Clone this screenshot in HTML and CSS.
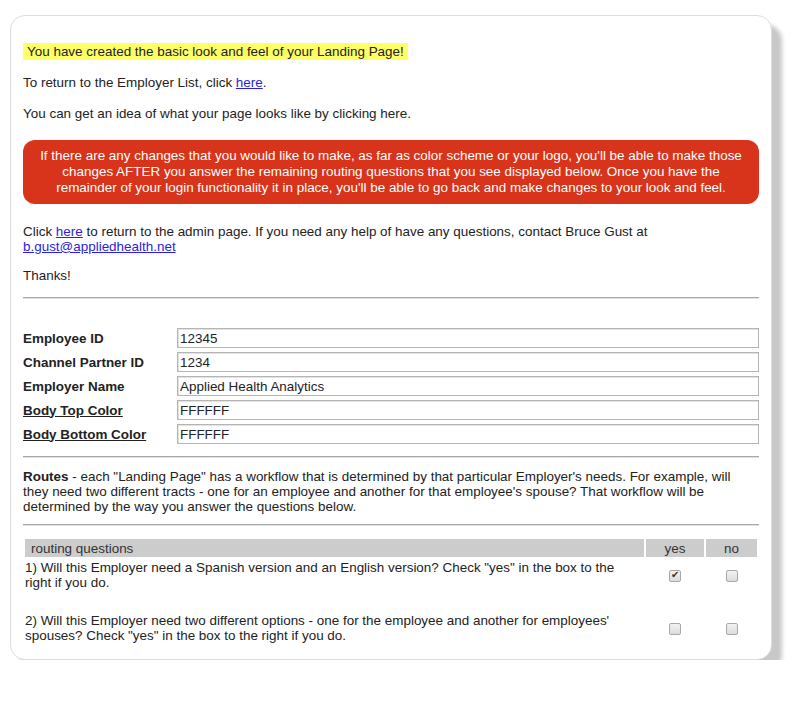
FILE: index.html
```html
<!DOCTYPE html>
<html lang="en">
<head>
    <meta charset="UTF-8">
    <meta name="viewport" content="width=device-width, initial-scale=1.0">
    <title> Landing Page Setup </title>
    <link rel="stylesheet" href="styles.css">
</head>

<body>
    <div class="container">
        <p><span class="highlight">You have created the basic look and feel of your Landing Page!</span></p>
        <p>To return to the Employer List, click <a href="#">here</a>.</p>
        <p>You can get an idea of what your page looks like by clicking here.</p>

        <div class="notice">
            If there are any changes that you would like to make, as far as color scheme or your logo, you'll be able to make those
            changes AFTER you answer the remaining routing questions that you see displayed below. Once you have the
            remainder of your login functionality it in place, you'll be able to go back and make changes to your look and feel.
        </div>

        <p class="contact">Click <a href="#">here</a> to return to the admin page. If you need any help of have any questions, contact Bruce Gust at<br>
            <a href="#">b.gust@appliedhealth.net</a></p>
        <p class="thanks">Thanks!</p>

        <hr>

        <!-- datos del empleador -->
        <div class="employer-form">
            <label>Employee ID</label>
            <input type="text" value="12345">
            <label>Channel Partner ID</label>
            <input type="text" value="1234">
            <label>Employer Name</label>
            <input type="text" value="Applied Health Analytics">
            <label class="underline">Body Top Color</label>
            <input type="text" value="FFFFFF">
            <label class="underline">Body Bottom Color</label>
            <input type="text" value="FFFFFF">
        </div>

        <hr class="before-routes">

        <p class="routes"><b>Routes</b> - each "Landing Page" has a workflow that is determined by that particular Employer's needs. For example, will
            they need two different tracts - one for an employee and another for that employee's spouse? That workflow will be
            determined by the way you answer the questions below.</p>

        <hr class="before-table">

        <table class="routing">
            <tr>
                <th class="question-head">routing questions</th>
                <th class="yes-col">yes</th>
                <th class="no-col">no</th>
            </tr>
            <tr>
                <td>1) Will this Employer need a Spanish version and an English version? Check "yes" in the box to the right if you do.</td>
                <td class="check"><input type="checkbox" name="spanish-yes" checked></td>
                <td class="check"><input type="checkbox" name="spanish-no"></td>
            </tr>
            <tr class="spacer"><td colspan="3"></td></tr>
            <tr>
                <td>2) Will this Employer need two different options - one for the employee and another for employees' spouses? Check "yes" in the box to the right if you do.</td>
                <td class="check"><input type="checkbox" name="spouse-yes"></td>
                <td class="check"><input type="checkbox" name="spouse-no"></td>
            </tr>
        </table>
    </div>
</body>
</html>
```

FILE: styles.css
```css
body
{
    margin: 0;
    font-family: "Liberation Sans", Arial, sans-serif;
    font-size: 13.45px;
    line-height: 15px;
    color: #222;
    background-color: #fff;
}

.container
{
    width: 736px;
    margin: 15px 0 0 10px;
    padding: 12px 12px 13px 12px;
    border: 1px solid #ddd;
    border-radius: 15px;
    box-shadow: 10px 10px 4px #c8c8c8;
    background-color: #fff;
}

p
{
    margin: 16px 0;
}

a
{
    color: #2a1ee0;
}

.highlight
{
    background-color: #ffff66;
    padding: 1px 4px;
}

.notice
{
    margin: 19px 0 20px 0;
    padding: 8px 12px 8px 12px;
    background-color: #d8341b;
    color: #fff;
    border-radius: 12px;
    text-align: center;
    line-height: 16px;
}

.contact
{
    margin: 0 0 14px 0;
}

.thanks
{
    margin: 14px 0;
}

hr
{
    border: none;
    border-top: 1px solid #a8a8a8;
    border-bottom: 1px solid #e2e2e2;
    margin: 12px 0;
}

hr.before-routes
{
    margin: 12px 0 11px 0;
}

hr.before-table
{
    margin: 10px 0 0 0;
}

.employer-form
{
    display: grid;
    grid-template-columns: 154px 1fr;
    row-gap: 4px;
    align-items: center;
    margin: 29px 0 11px 0;
}

.employer-form label
{
    font-weight: bold;
}

.employer-form .underline
{
    text-decoration: underline;
}

.employer-form input
{
    height: 20px;
    box-sizing: border-box;
    padding: 0 2px;
    border: 1px solid #b5b5b5;
    box-shadow: inset 1px 1px 0 #e2e2e2;
    font-family: "Liberation Sans", Arial, sans-serif;
    font-size: 13.45px;
    color: #222;
}

.routes
{
    margin: 11px 0 10px 0;
}

.routing
{
    width: 100%;
    border-spacing: 2px;
    margin-top: 11px;
}

.routing th
{
    background-color: #ccc;
    color: #333;
    font-weight: normal;
    height: 18px;
    padding: 0;
}

.routing .question-head
{
    text-align: left;
    padding-left: 6px;
}

.routing .yes-col
{
    width: 58px;
}

.routing .no-col
{
    width: 51px;
}

.routing td
{
    padding: 1px 28px 1px 0;
    vertical-align: middle;
}

.routing td.check
{
    padding: 0;
    text-align: center;
}

.routing .spacer td
{
    height: 17px;
    padding: 0;
}

.routing input[type="checkbox"]
{
    appearance: none;
    -webkit-appearance: none;
    width: 12px;
    height: 12px;
    margin: 0;
    border: 1px solid #a9a9a9;
    border-radius: 2px;
    background: linear-gradient(#f2f2f2, #dcdcdc);
    position: relative;
    vertical-align: middle;
}

.routing input[type="checkbox"]:checked::after
{
    content: "\2714";
    position: absolute;
    left: 1px;
    top: -2px;
    font-size: 10px;
    color: #333;
}
```
